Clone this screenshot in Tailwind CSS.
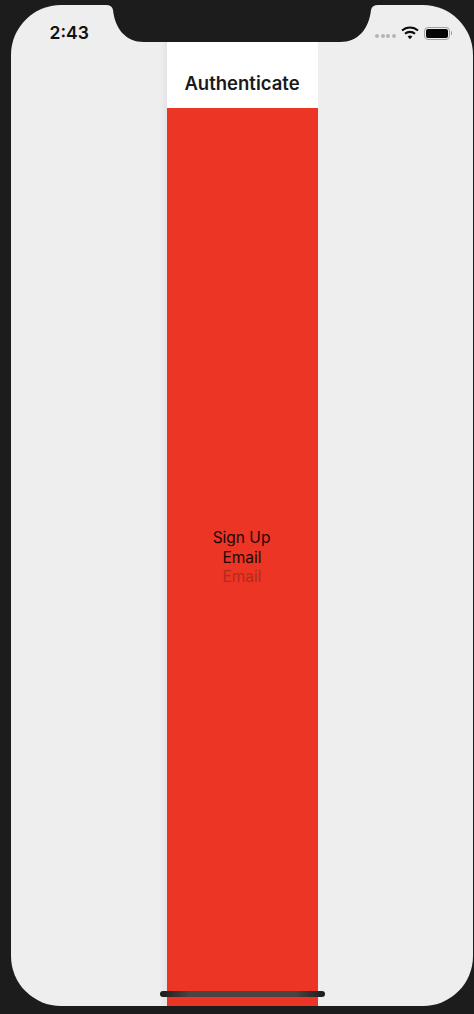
<!DOCTYPE html>
<html lang="en">
<head>
  <meta charset="UTF-8">
  <meta name="viewport" content="width=device-width, initial-scale=1.0">
  <title>Authenticate</title>
  <script src="https://cdn.jsdelivr.net/npm/@tailwindcss/browser@4"></script>
</head>
<body class="bg-[#1c1c1c] font-['Inter',sans-serif] overflow-hidden">

  <div class="w-[474px] h-[1014px] pl-[11px] pt-[5px]">
    <!-- device screen -->
    <div class="relative w-[462px] h-[1001px] bg-[#eeeeee] rounded-[50px] overflow-hidden flex justify-center">

      <!-- view column -->
      <div class="w-[151px] pt-[37px] flex flex-col shadow-[-3px_0_6px_rgba(0,0,0,0.05)]">
        <div class="h-[66px] bg-white pt-[29px] text-center text-[18.5px] leading-[24px] font-semibold text-[#1a1a1a] whitespace-nowrap">Authenticate</div>
        <div class="flex-1 bg-[#ec3524] flex flex-col items-center justify-center pt-[1px] text-[15.5px] leading-[19.5px]">
          <div class="text-[#1c0505] pr-[1px]">Sign Up</div>
          <div class="text-[#1c0505]">Email</div>
          <div class="text-[#b52a20]">Email</div>
        </div>
      </div>

      <!-- notch -->
      <svg class="absolute left-[-11px] top-[-5px]" width="474" height="50" viewBox="0 0 474 50">
        <path d="M106 0 L106 5 Q112 5 113 10 C115 29 126 42 144 42 L340 42 C358 42 369 29 371 10 Q372 5 378 5 L378 0 Z" fill="#1c1c1c"/>
      </svg>

      <!-- status bar -->
      <div class="absolute left-[38.5px] top-[17px] text-[17.5px] leading-[22px] font-semibold text-[#111111]">2:43</div>
      <div class="absolute left-[364px] top-[21px] flex items-center">
        <div class="flex gap-[1.5px] mt-[5px]">
          <span class="w-[4px] h-[4px] rounded-full bg-[#b5b5b5]"></span>
          <span class="w-[4px] h-[4px] rounded-full bg-[#b5b5b5]"></span>
          <span class="w-[4px] h-[4px] rounded-full bg-[#b5b5b5]"></span>
          <span class="w-[4px] h-[4px] rounded-full bg-[#b5b5b5]"></span>
        </div>
        <svg class="ml-[5px]" width="18" height="14" viewBox="0 0 18 14" fill="none" stroke="#0d0d0d" stroke-width="2.1">
          <path d="M1 4.6 C5.5 0.4 12.5 0.4 17 4.6"/>
          <path d="M4 7.8 C6.8 5.2 11.2 5.2 14 7.8"/>
          <path d="M9 13.2 L6.6 10.5 C8 9.3 10 9.3 11.4 10.5 Z" fill="#0d0d0d" stroke="none"/>
        </svg>
        <div class="ml-[5px] w-[26px] h-[13px] rounded-[4px] border-[1.5px] border-[#a0a0a0] p-[1px]">
          <div class="w-full h-full rounded-[2px] bg-[#050505]"></div>
        </div>
        <div class="ml-[1px] w-[1.5px] h-[4px] rounded-r-sm bg-[#9a9a9a]"></div>
      </div>

      <!-- home indicator -->
      <div class="absolute left-[149px] top-[986px] w-[165px] h-[6px] rounded-full bg-[linear-gradient(to_right,#1c1c1c,#4a4444_18%,#4a4444_82%,#1c1c1c)]"></div>
    </div>
  </div>

</body>
</html>
